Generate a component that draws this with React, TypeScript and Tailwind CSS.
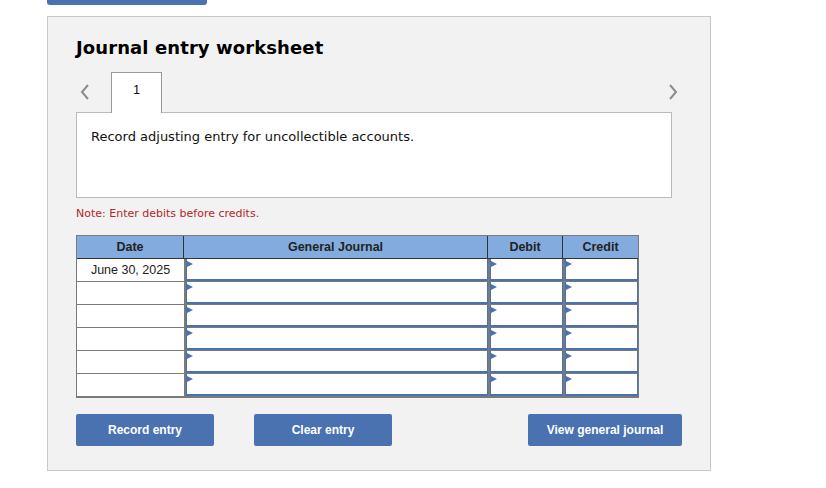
import React from "react";

const cols = "grid grid-cols-[107px_304px_75px_75px]";

function InputCell() {
  return (
    <div className="relative h-full border-l-2 border-[#7a7a7a]">
      <div className="h-full border-l border-b-2 border-r border-[#4a72b0] bg-white" />
      <div className="absolute left-[1px] top-[2px] h-0 w-0 border-y-[3px] border-l-[6px] border-y-transparent border-l-[#4a72b0]" />
    </div>
  );
}

function Row({ date }: { date?: string }) {
  return (
    <div className={`${cols} h-[23px] border-b border-[#7a7a7a]`}>
      <div className="flex items-center justify-center bg-white text-[12.5px] text-[#222]">{date}</div>
      <InputCell />
      <InputCell />
      <InputCell />
    </div>
  );
}

function Chevron({ dir }: { dir: "left" | "right" }) {
  return (
    <svg width="10" height="16" viewBox="0 0 10 16">
      <polyline
        points={dir === "left" ? "8,1 2,8 8,15" : "2,1 8,8 2,15"}
        fill="none"
        stroke="#8c8c8c"
        strokeWidth="2"
      />
    </svg>
  );
}

const btn =
  "h-8 rounded-[2px] bg-[#4a72b0] text-[12px] font-bold text-white font-['Liberation_Sans',Arial,sans-serif]";

export default function App() {
  return (
    <div className="min-h-[488px] w-[826px] bg-white font-['DejaVu_Sans',Verdana,sans-serif]">
      <div className="ml-[47px] h-[5px] w-[160px] rounded-b-[3px] bg-[#4a72b0]" />
      <div className="ml-[47px] mt-[11px] w-[664px] border border-[#c8c8c8] bg-[#f2f2f2] pb-[24px] pl-[28px] pt-[20px]">
        <h1 className="text-[18px] font-bold leading-[22px] tracking-[0.1px] text-black">Journal entry worksheet</h1>

        <div className="mt-[13px] flex h-[40px] w-[602px] items-center">
          <div className="flex w-[35px] justify-start pl-[4px]">
            <Chevron dir="left" />
          </div>
          <div className="relative z-10 flex h-[41px] w-[51px] self-start justify-center border border-b-0 border-[#999] bg-white pt-[8px] text-[12px] text-black font-['Liberation_Sans',Arial,sans-serif]">
            1
          </div>
          <div className="flex-1" />
          <Chevron dir="right" />
        </div>
        <div className="h-[86px] w-[596px] border border-[#bbb] bg-white pl-[14px] pt-[14px] text-[13px] text-[#111]">
          Record adjusting entry for uncollectible accounts.
        </div>

        <div className="mt-[9px] text-[11px] leading-[14px] text-[#b3262b]">Note: Enter debits before credits.</div>

        <div className="mt-[14px] w-[563px] border border-[#7a7a7a] font-['Liberation_Sans',Arial,sans-serif]">
          <div className={`${cols} h-[23px] border-b border-[#333] bg-[#84abde] text-[12.5px] font-bold text-[#222]`}>
            <div className="flex items-center justify-center border-r border-[#333]">Date</div>
            <div className="flex items-center justify-center border-r border-[#333]">General Journal</div>
            <div className="flex items-center justify-center border-r border-[#333]">Debit</div>
            <div className="flex items-center justify-center">Credit</div>
          </div>
          <Row date="June 30, 2025" />
          <Row />
          <Row />
          <Row />
          <Row />
          <Row />
        </div>

        <div className="mt-[16px] flex w-[606px]">
          <button className={`${btn} w-[138px]`}>Record entry</button>
          <button className={`${btn} ml-[40px] w-[138px]`}>Clear entry</button>
          <div className="flex-1" />
          <button className={`${btn} w-[154px]`}>View general journal</button>
        </div>
      </div>
    </div>
  );
}
